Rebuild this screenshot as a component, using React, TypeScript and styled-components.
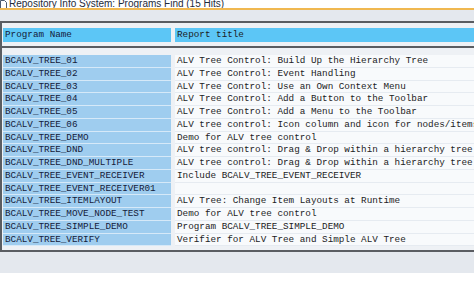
import React from "react";
import styled, { createGlobalStyle } from "styled-components";

const Global = createGlobalStyle`
  html, body { margin: 0; padding: 0; background: #ffffff; }
  body { width: 474px; height: 305px; overflow: hidden; }
`;

const Page = styled.div`
  width: 474px;
  display: flex;
  flex-direction: column;
`;

const TitleBar = styled.div`
  height: 8px;
  overflow: hidden;
  background: #ffffff;
  border-bottom: 2px solid #f0b850;
  display: flex;
  align-items: flex-end;
  gap: 2px;
`;

const TitleText = styled.span`
  font-family: "Liberation Sans", Arial, sans-serif;
  font-size: 10px;
  line-height: 12px;
  color: #1e2b3a;
  margin-bottom: -2px;
  white-space: nowrap;
`;

const DocIcon = styled.svg`
  flex: none;
  margin-bottom: -2px;
`;

const ToolStrip = styled.div`
  height: 11px;
  background: #e4e8ee;
`;

const Table = styled.div`
  display: grid;
  grid-template-columns: 171px 1fr;
  border-top: 2px solid #5a5d62;
  border-bottom: 2px solid #5a5d62;
  border-left: 2px solid #5a5d62;
  background: #eef1f5;
`;

const Spacer = styled.div<{ $h: number; $line?: boolean }>`
  grid-column: 1 / -1;
  height: ${(p) => p.$h}px;
  background: ${(p) => (p.$line ? "#5a5d62" : "#eef1f5")};
`;

const LeftCell = styled.div<{ $head?: boolean }>`
  height: ${(p) => (p.$head ? 14 : 12.75)}px;
  box-sizing: border-box;
  margin-left: 1px;
  margin-right: 2px;
  padding-left: 2px;
  background: ${(p) => (p.$head ? "#5cc6f6" : "#9fcdef")};
  border-bottom: ${(p) => (p.$head ? "none" : "1px solid #d6e9f8")};
  font-family: "Liberation Mono", "Courier New", monospace;
  font-size: 9.3px;
  line-height: ${(p) => (p.$head ? 14 : 12)}px;
  color: #14203a;
  white-space: nowrap;
  overflow: hidden;
`;

const RightCell = styled.div<{ $head?: boolean }>`
  height: ${(p) => (p.$head ? 14 : 12.75)}px;
  box-sizing: border-box;
  margin-left: 2px;
  padding-left: 2px;
  background: ${(p) => (p.$head ? "#5cc6f6" : "#f8fafc")};
  border-bottom: ${(p) => (p.$head ? "none" : "1px solid #e6ebf1")};
  font-family: "Liberation Mono", "Courier New", monospace;
  font-size: 9.3px;
  line-height: ${(p) => (p.$head ? 14 : 12)}px;
  color: #1c1c24;
  white-space: nowrap;
  overflow: hidden;
`;

const Row = styled.div`
  display: contents;
`;

const Divider = styled.div`
  grid-column: 1;
  grid-row: 1 / -1;
  justify-self: end;
  width: 2px;
  background: #5a5d62;
  z-index: 1;
`;

const BottomStrip = styled.div`
  height: 21px;
  background: #e4e8ee;
`;

const rows: [string, string][] = [
  ["BCALV_TREE_01", "ALV Tree Control: Build Up the Hierarchy Tree"],
  ["BCALV_TREE_02", "ALV Tree Control: Event Handling"],
  ["BCALV_TREE_03", "ALV Tree Control: Use an Own Context Menu"],
  ["BCALV_TREE_04", "ALV Tree Control: Add a Button to the Toolbar"],
  ["BCALV_TREE_05", "ALV Tree Control: Add a Menu to the Toolbar"],
  ["BCALV_TREE_06", "ALV tree control: Icon column and icon for nodes/items"],
  ["BCALV_TREE_DEMO", "Demo for ALV tree control"],
  ["BCALV_TREE_DND", "ALV tree control: Drag & Drop within a hierarchy tree"],
  ["BCALV_TREE_DND_MULTIPLE", "ALV tree control: Drag & Drop within a hierarchy tree"],
  ["BCALV_TREE_EVENT_RECEIVER", "Include BCALV_TREE_EVENT_RECEIVER"],
  ["BCALV_TREE_EVENT_RECEIVER01", ""],
  ["BCALV_TREE_ITEMLAYOUT", "ALV Tree: Change Item Layouts at Runtime"],
  ["BCALV_TREE_MOVE_NODE_TEST", "Demo for ALV tree control"],
  ["BCALV_TREE_SIMPLE_DEMO", "Program BCALV_TREE_SIMPLE_DEMO"],
  ["BCALV_TREE_VERIFY", "Verifier for ALV Tree and Simple ALV Tree"],
];

export default function App() {
  return (
    <Page>
      <Global />
      <TitleBar>
        <DocIcon width="7" height="10" viewBox="0 0 7 10">
          <path d="M0.5 0.5 H4.5 L6.5 2.5 V9.5 H0.5 Z" fill="#ffffff" stroke="#4a5a70" strokeWidth="1" />
        </DocIcon>
        <TitleText>Repository Info System: Programs Find (15 Hits)</TitleText>
      </TitleBar>
      <ToolStrip />
      <Table>
        <Spacer $h={5} />
        <LeftCell $head>Program Name</LeftCell>
        <RightCell $head>Report title</RightCell>
        <Spacer $h={4} />
        <Spacer $h={2} $line />
        <Spacer $h={7} />
        {rows.map(([name, title]) => (
          <Row key={name}>
            <LeftCell>{name}</LeftCell>
            <RightCell>{title}</RightCell>
          </Row>
        ))}
        <Spacer $h={4} />
        <Divider />
      </Table>
      <BottomStrip />
    </Page>
  );
}
